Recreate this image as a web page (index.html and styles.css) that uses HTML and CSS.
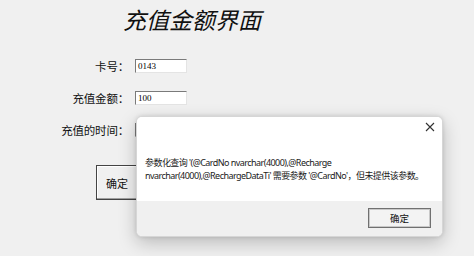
FILE: index.html
```html
<!DOCTYPE html>
<html lang="zh">
<head>
<meta charset="utf-8">
<link rel="stylesheet" href="styles.css">
</head>
<body>
<div class="page">
  <h1 class="title">充值金额界面</h1>
  <div class="form">
    <label class="lbl">卡号：</label>
    <div class="field">0143</div>
    <label class="lbl">充值金额：</label>
    <div class="field">100</div>
    <label class="lbl">充值的时间：</label>
    <div class="field"></div>
  </div>
  <div class="actions">
    <button class="win-btn">确定</button>
  </div>
</div>

<div class="dialog">
  <div class="dialog-body">
    <span class="close">
      <svg width="10" height="10" viewBox="0 0 10 10"><path d="M1 1 L9 9 M9 1 L1 9" stroke="#333" stroke-width="1.1" fill="none"/></svg>
    </span>
    <p class="msg">参数化查询 '(@CardNo nvarchar(4000),@Recharge<br>nvarchar(4000),@RechargeDataTi' 需要参数 '@CardNo'，但未提供该参数。</p>
  </div>
  <div class="dialog-foot">
    <button class="ok-btn">确定</button>
  </div>
</div>
</body>
</html>
```

FILE: styles.css
```css
html, body {
  margin: 0;
  padding: 0;
}
body {
  width: 474px;
  height: 256px;
  overflow: hidden;
  background: #f0f0f0;
  font-family: "Noto Sans CJK SC", "Noto Sans", sans-serif;
  color: #111;
  position: relative;
}
.page {
  display: flex;
  flex-direction: column;
}
.title {
  margin: 0;
  padding-left: 123px;
  height: 38px;
  line-height: 38px;
  font-size: 23px;
  font-weight: normal;
  font-style: italic;
  color: #111;
}
.form {
  margin-top: 21px;
  display: grid;
  grid-template-columns: 129px 52px;
  grid-auto-rows: 14px;
  column-gap: 6px;
  row-gap: 18px;
}
.lbl {
  text-align: right;
  font-size: 11.5px;
  line-height: 14px;
  color: #111;
  letter-spacing: -0.2px;
}
.field {
  background: #fff;
  border-top: 1px solid #7a7a7a;
  border-left: 1px solid #7a7a7a;
  border-right: 1px solid #e4e4e4;
  border-bottom: 1px solid #e4e4e4;
  box-sizing: border-box;
  font-family: "Liberation Serif", serif;
  font-size: 9px;
  line-height: 12px;
  padding-left: 2px;
  color: #000;
}
.actions {
  margin-top: 28px;
  padding-left: 96px;
}
.win-btn {
  width: 42px;
  height: 35px;
  background: #f0f0f0;
  border: 1px solid #444;
  box-shadow: inset -1px -1px 0 #a0a0a0, inset 1px 1px 0 #fff;
  font-family: "Noto Sans CJK SC", sans-serif;
  font-size: 11px;
  padding: 0;
  color: #111;
}
.dialog {
  position: absolute;
  left: 136px;
  top: 116px;
  width: 307px;
  height: 121px;
  border-radius: 6px;
  overflow: hidden;
  background: #fff;
  border: 1px solid #d6d6d6;
  box-sizing: border-box;
  box-shadow: 0 6px 18px rgba(0, 0, 0, 0.22), 0 0 4px rgba(0, 0, 0, 0.12);
  display: flex;
  flex-direction: column;
}
.dialog-body {
  height: 84px;
  position: relative;
  background: #fff;
}
.close {
  position: absolute;
  right: 7px;
  top: 5px;
  width: 10px;
  height: 10px;
  display: block;
}
.close svg { display: block; }
.msg {
  margin: 0;
  padding: 39px 0 0 8px;
  font-family: "Noto Sans", "Noto Sans CJK SC", sans-serif;
  font-size: 9px;
  line-height: 13px;
  color: #1a1a1a;
  letter-spacing: -0.55px;
  white-space: nowrap;
}
.dialog-foot {
  flex: 1;
  background: #f0f0f0;
  display: flex;
  justify-content: flex-end;
  align-items: flex-start;
  padding: 7px 11px 0 0;
}
.ok-btn {
  width: 63px;
  height: 20px;
  background: #f3f3f3;
  border: 1px solid #707070;
  box-shadow: inset 0 0 0 1px #c8c8c8;
  font-family: "Noto Sans CJK SC", sans-serif;
  font-size: 9.5px;
  padding: 0;
  color: #111;
}
```
